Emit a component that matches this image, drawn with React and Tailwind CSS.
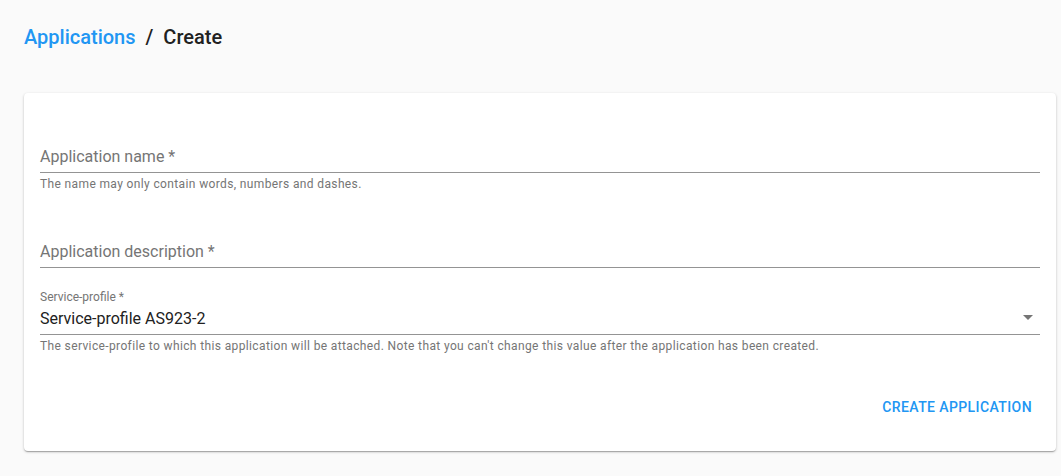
import React from "react";

const font = { fontFamily: "Roboto, 'Liberation Sans', sans-serif" };

function TextField({ label, helper }) {
  return (
    <div>
      <div className="border-b border-[#949494] pb-[6px]">
        <span className="block text-[16px] leading-[19px] text-[#757575]">{label}</span>
      </div>
      {helper && (
        <p className="mt-[5px] text-[12px] leading-[12px] tracking-[0.37px] text-[#757575]">{helper}</p>
      )}
    </div>
  );
}

export default function App() {
  return (
    <div className="min-h-[476px] bg-[#fafafa] pl-[24px] pr-[5px] pt-[25px]" style={font}>
      <h1 className="flex items-center text-[20px] font-medium leading-6 text-[#212121]">
        <span className="text-[#2196f3]">Applications</span>
        <span className="mx-[10px]">/</span>
        <span>Create</span>
      </h1>

      <div className="mt-[44px] h-[358px] rounded bg-white px-4 pt-[54px] shadow-[0_1px_3px_0_rgba(0,0,0,0.2),0_1px_1px_0_rgba(0,0,0,0.14),0_2px_1px_-1px_rgba(0,0,0,0.12)]">
        <TextField
          label="Application name *"
          helper="The name may only contain words, numbers and dashes."
        />

        <div className="mt-[52px]">
          <TextField label="Application description *" />
        </div>

        {/* Service-profile select */}
        <div className="mt-[23px]">
          <span className="block text-[12px] leading-[12px] text-[#757575]">Service-profile *</span>
          <div className="relative mt-[6px] border-b border-[#949494] pb-[6px]">
            <span className="block text-[16px] leading-[19px] text-[#212121]">Service-profile AS923-2</span>
            <svg className="absolute right-0 top-[-4px] h-6 w-6" viewBox="0 0 24 24" fill="#757575">
              <path d="M7 10l5 5 5-5z" />
            </svg>
          </div>
          <p className="mt-[5px] text-[12px] leading-[12px] tracking-[0.37px] text-[#757575]">
            The service-profile to which this application will be attached. Note that you can't change this value after the application has been created.
          </p>
        </div>

        <div className="mt-[37px] flex justify-end">
          <button className="rounded px-2 py-2 text-[14px] font-medium uppercase leading-5 tracking-[0.4px] text-[#2196f3]">
            Create application
          </button>
        </div>
      </div>
    </div>
  );
}
